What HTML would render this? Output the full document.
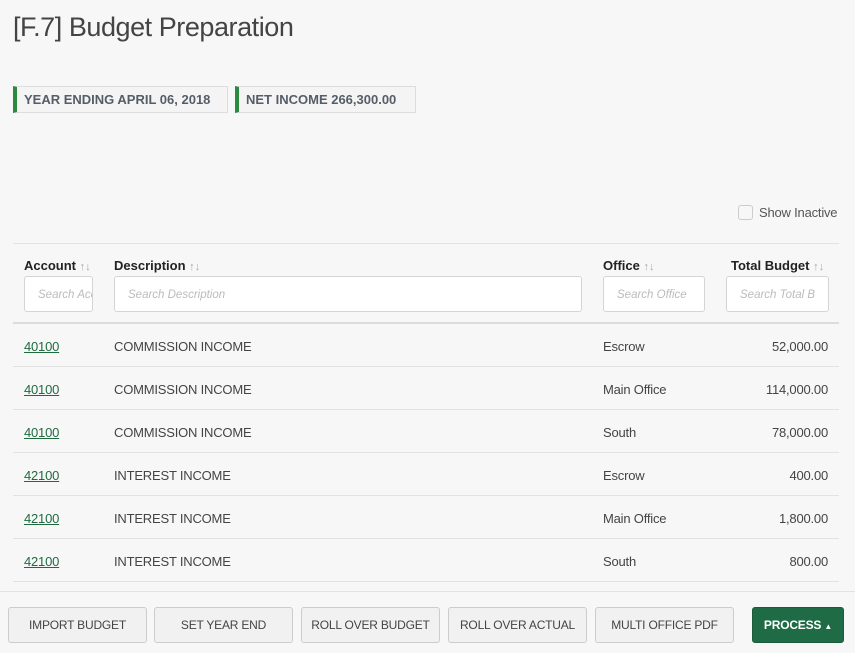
<!DOCTYPE html>
<html><head><style>
*{box-sizing:border-box;margin:0;padding:0}
body{width:855px;height:653px;background:#f7f7f7;font-family:"Liberation Sans",sans-serif;color:#333;position:relative;overflow:hidden}
.abs{position:absolute}
h1{position:absolute;left:13px;top:12px;font-size:27px;font-weight:300;color:#444;letter-spacing:-0.45px}
.tag{position:absolute;top:86px;height:27px;border:1px solid #ddd;border-left:4px solid #2b8a3e;background:#f4f4f4;font-weight:bold;font-size:13px;color:#555d66;line-height:25px;padding-left:7px}
.cb{left:738px;top:205px;width:15px;height:15px;border:1px solid #ccc;border-radius:3px;background:#f7f7f7}
.hl{left:13px;width:826px;height:1px;background:#e2e2e2}
.th{top:258px;font-size:13px;font-weight:bold;color:#222}
.th span{color:#aaa;font-weight:normal;font-size:11px}
.in{top:276px;height:36px;border:1px solid #d4d4d4;border-radius:3px;background:#fff;font-size:11.5px;font-style:italic;color:#bbb;line-height:36px;padding-left:13px;overflow:hidden;white-space:nowrap}
.row{position:absolute;left:13px;width:826px;height:43px;border-bottom:1px solid #e2e2e2;font-size:13px;color:#444;letter-spacing:-0.2px}
.row div{position:absolute;top:15px}
.a{left:11px;color:#1f6b3f;text-decoration:underline}
.d{left:101px}
.o{left:590px}
.t{right:11px}
.btn{position:absolute;top:607px;height:36px;border:1px solid #ccc;border-radius:3px;background:#f1f1f1;font-size:12px;color:#444;text-align:center;line-height:35px;letter-spacing:-0.2px}
</style></head><body>
<h1>[F.7] Budget Preparation</h1>
<div class="tag" style="left:13px;width:215px">YEAR ENDING APRIL 06, 2018</div>
<div class="tag" style="left:235px;width:181px">NET INCOME 266,300.00</div>
<div class="abs cb"></div>
<div class="abs" style="left:759px;top:205px;font-size:13px;color:#555;letter-spacing:-0.2px">Show Inactive</div>
<div class="abs hl" style="top:243px"></div>
<div class="abs th" style="left:24px">Account <span>↑↓</span></div>
<div class="abs th" style="left:114px">Description <span>↑↓</span></div>
<div class="abs th" style="left:603px">Office <span>↑↓</span></div>
<div class="abs th" style="left:731px">Total Budget <span>↑↓</span></div>
<div class="abs in" style="left:24px;width:69px">Search Account</div>
<div class="abs in" style="left:114px;width:468px">Search Description</div>
<div class="abs in" style="left:603px;width:102px">Search Office</div>
<div class="abs in" style="left:726px;width:103px">Search Total B</div>
<div class="abs" style="left:13px;top:322px;width:826px;height:2px;background:#dcdcdc"></div>
<div class="row" style="top:324px"><div class="a">40100</div><div class="d">COMMISSION INCOME</div><div class="o">Escrow</div><div class="t">52,000.00</div></div>
<div class="row" style="top:367px"><div class="a">40100</div><div class="d">COMMISSION INCOME</div><div class="o">Main Office</div><div class="t">114,000.00</div></div>
<div class="row" style="top:410px"><div class="a">40100</div><div class="d">COMMISSION INCOME</div><div class="o">South</div><div class="t">78,000.00</div></div>
<div class="row" style="top:453px"><div class="a">42100</div><div class="d">INTEREST INCOME</div><div class="o">Escrow</div><div class="t">400.00</div></div>
<div class="row" style="top:496px"><div class="a">42100</div><div class="d">INTEREST INCOME</div><div class="o">Main Office</div><div class="t">1,800.00</div></div>
<div class="row" style="top:539px"><div class="a">42100</div><div class="d">INTEREST INCOME</div><div class="o">South</div><div class="t">800.00</div></div>
<div class="abs" style="left:0;top:591px;width:855px;height:62px;background:#f7f7f7;border-top:1px solid #e2e2e2"></div>
<div class="btn" style="left:8px;width:139px">IMPORT BUDGET</div>
<div class="btn" style="left:154px;width:139px">SET YEAR END</div>
<div class="btn" style="left:301px;width:139px">ROLL OVER BUDGET</div>
<div class="btn" style="left:448px;width:139px">ROLL OVER ACTUAL</div>
<div class="btn" style="left:595px;width:139px">MULTI OFFICE PDF</div>
<div class="btn" style="left:752px;width:92px;background:#1f6b45;border-color:#1a5c3b;color:#fff;font-weight:bold">PROCESS <span style="font-size:8px">▲</span></div>
</body></html>
